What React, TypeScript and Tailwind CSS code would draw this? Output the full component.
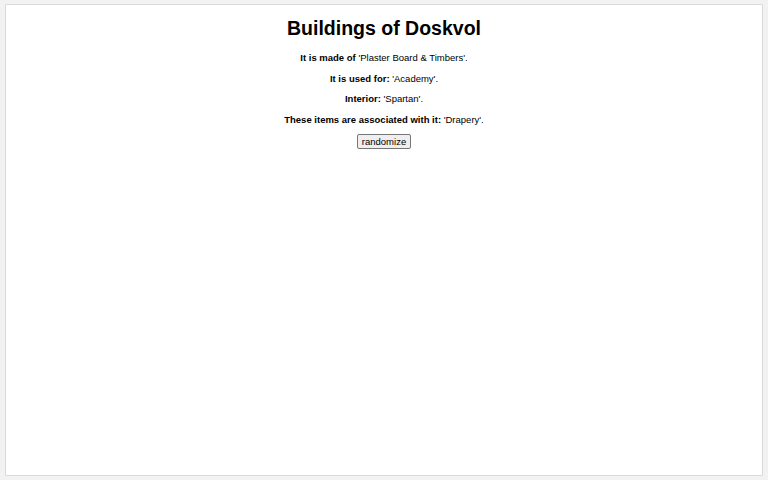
export default function App() {
  const rows = [
    { label: "It is made of", value: "'Plaster Board & Timbers'." },
    { label: "It is used for:", value: "'Academy'." },
    { label: "Interior:", value: "'Spartan'." },
    { label: "These items are associated with it:", value: "'Drapery'." },
  ];

  return (
    <div className="h-[480px] bg-[#f2f2f2] pt-[4px] pb-[4px] px-[5px] font-['Liberation_Sans',Arial,sans-serif] text-black">
      <div className="h-[472px] bg-white border border-[#dadada] flex flex-col items-center pt-[11px]">
        <h1 className="text-[19.5px] font-bold leading-[24px]">Buildings of Doskvol</h1>
        <div className="mt-[12px] flex flex-col items-center gap-[9px]">
          {rows.map((r) => (
            <p key={r.label} className="text-[9.5px] leading-[11.5px]">
              <b>{r.label}</b> {r.value}
            </p>
          ))}
        </div>
        <button className="mt-[9px] text-[9.5px] leading-[11px] px-[4px] py-[1px] bg-[#efefef] border border-[#767676] rounded-[2px]">
          randomize
        </button>
      </div>
    </div>
  );
}
